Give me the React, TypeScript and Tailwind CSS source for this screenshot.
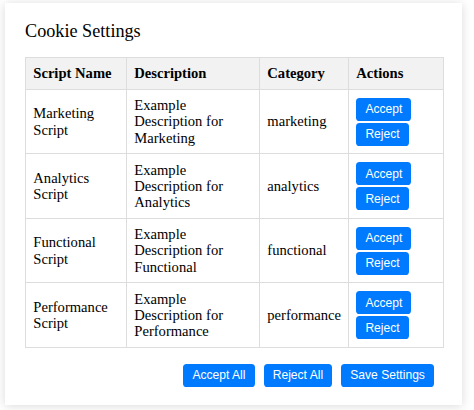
import React from 'react';

type ScriptRow = {
  name: string;
  description: string;
  category: string;
};

const scripts: ScriptRow[] = [
  { name: 'Marketing Script', description: 'Example Description for Marketing', category: 'marketing' },
  { name: 'Analytics Script', description: 'Example Description for Analytics', category: 'analytics' },
  { name: 'Functional Script', description: 'Example Description for Functional', category: 'functional' },
  { name: 'Performance Script', description: 'Example Description for Performance', category: 'performance' },
];

function BlueButton({ children }: { children: React.ReactNode }) {
  return (
    <button className="bg-[#007bff] text-white rounded-[3.6px] px-[9.1px] py-[4.5px] text-[12.1px] leading-[14px] font-['Liberation_Sans',Arial,sans-serif] cursor-pointer hover:bg-[#0069d9]">
      {children}
    </button>
  );
}

export default function App() {
  return (
    <div className="bg-white min-h-[410px] pt-[3px] pl-[5px]">
      <div className="w-[457px] bg-white shadow-[0_1px_10px_rgba(0,0,0,0.15)] px-[20px] pt-[18px] pb-[18px] font-['Liberation_Serif',serif] text-black">
        <h2 className="text-[18.2px] leading-[21px] mb-[15px]">Cookie Settings</h2>

        <table className="w-[418px] table-fixed border-collapse text-[14.6px] leading-[16.3px]">
          <colgroup>
            <col className="w-[101px]" />
            <col className="w-[133px]" />
            <col className="w-[89px]" />
            <col className="w-[95px]" />
          </colgroup>
          <thead>
            <tr className="bg-[#f2f2f2]">
              <th className="border border-[#ddd] px-[7.3px] py-[7.3px] text-left font-bold">Script Name</th>
              <th className="border border-[#ddd] px-[7.3px] py-[7.3px] text-left font-bold">Description</th>
              <th className="border border-[#ddd] px-[7.3px] py-[7.3px] text-left font-bold">Category</th>
              <th className="border border-[#ddd] px-[7.3px] py-[7.3px] text-left font-bold">Actions</th>
            </tr>
          </thead>
          <tbody>
            {scripts.map((s) => (
              <tr key={s.category}>
                <td className="border border-[#ddd] px-[7.3px] py-[7.3px] align-middle">{s.name}</td>
                <td className="border border-[#ddd] px-[7.3px] py-[7.3px] align-middle">{s.description}</td>
                <td className="border border-[#ddd] px-[7.3px] py-[7.3px] align-middle whitespace-nowrap">{s.category}</td>
                <td className="border border-[#ddd] px-[7.3px] py-[7.3px] align-middle">
                  <div className="flex flex-col items-start gap-[2px]">
                    <BlueButton>Accept</BlueButton>
                    <BlueButton>Reject</BlueButton>
                  </div>
                </td>
              </tr>
            ))}
          </tbody>
        </table>

        {/* Footer actions */}
        <div className="flex justify-end gap-[9px] mt-[16px] pr-[8px]">
          <BlueButton>Accept All</BlueButton>
          <BlueButton>Reject All</BlueButton>
          <BlueButton>Save Settings</BlueButton>
        </div>
      </div>
    </div>
  );
}
